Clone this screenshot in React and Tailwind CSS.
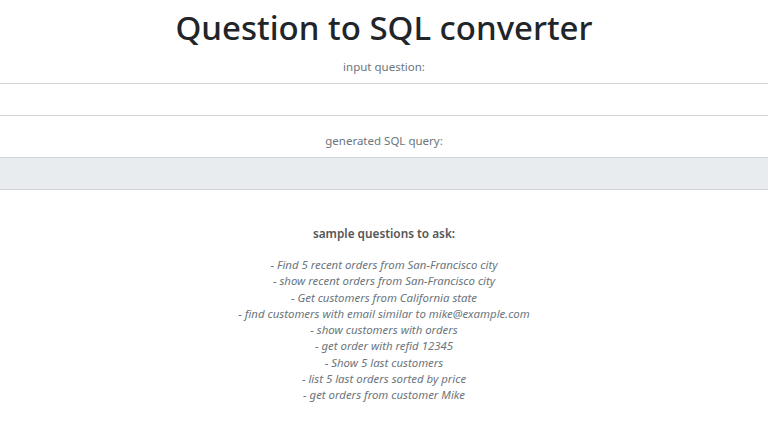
const samples = [
  "- Find 5 recent orders from San-Francisco city",
  "- show recent orders from San-Francisco city",
  "- Get customers from California state",
  "- find customers with email similar to mike@example.com",
  "- show customers with orders",
  "- get order with refid 12345",
  "- Show 5 last customers",
  "- list 5 last orders sorted by price",
  "- get orders from customer Mike",
];

export default function App() {
  return (
    <div className="min-h-screen bg-white text-center font-['Noto_Sans',sans-serif] text-[#212529]">
      <h1 className="pt-[7px] text-[33px] leading-[42px] font-medium">
        Question to SQL converter
      </h1>

      <label className="mt-[10px] block text-[11.5px] leading-[16px] text-[#6c757d]">
        input question:
      </label>
      <input
        type="text"
        className="mt-[8px] block h-[33px] w-full border-y border-[#ced4da] bg-white px-3 text-sm outline-none"
      />

      <label className="mt-[17px] block text-[11.5px] leading-[16px] text-[#6c757d]">
        generated SQL query:
      </label>
      <input
        type="text"
        disabled
        className="mt-[8px] block h-[33px] w-full border-y border-[#ced4da] bg-[#e9ecef] px-3 text-sm"
      />

      <div className="mt-[35px]">
        <p className="text-[11.8px] leading-[16px] font-semibold text-[#555]">
          sample questions to ask:
        </p>
        <ul className="mt-[16px] text-[11.4px] leading-[16.25px] italic text-[#6c757d]">
          {samples.map((q) => (
            <li key={q}>{q}</li>
          ))}
        </ul>
      </div>
    </div>
  );
}
